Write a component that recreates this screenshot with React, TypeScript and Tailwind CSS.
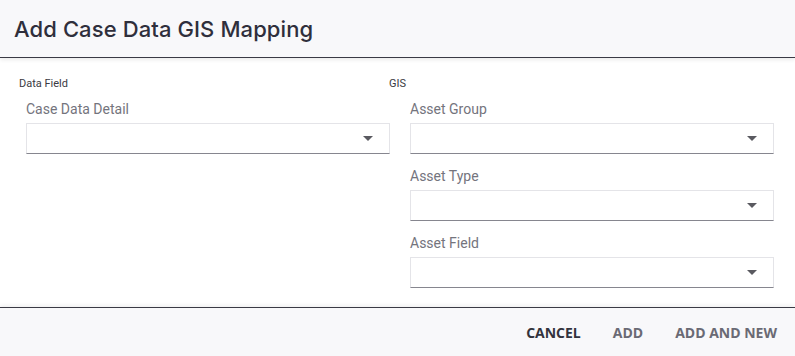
import React from "react";

function Select({ label }: { label: string }) {
  return (
    <div className="flex flex-col">
      <div className="text-[14px] leading-[16px] text-[#74747d] mb-[6px]">{label}</div>
      <div className="h-[31px] border border-[#e4e4e8] border-b-[#86868f] bg-white flex items-center justify-end pr-[16px]">
        <svg width="10" height="5" viewBox="0 0 10 5">
          <path d="M0 0 L10 0 L5 5 Z" fill="#5a5a60" />
        </svg>
      </div>
    </div>
  );
}

export default function App() {
  return (
    <div
      className="w-[795px] h-[356px] flex flex-col bg-white overflow-hidden"
      style={{ fontFamily: "Roboto, 'Liberation Sans', sans-serif" }}
    >
      <div className="h-[58px] shrink-0 bg-[#f8f8fa] border-b border-[#3a3a45] flex items-center px-[14px] shadow-[0_2px_4px_rgba(0,0,0,0.08)] relative z-10">
        <h1
          className="text-[22px] font-medium text-[#2f2f3c] leading-none tracking-[0.1px]"
          style={{ fontFamily: "Inter, Roboto, sans-serif" }}
        >
          Add Case Data GIS Mapping
        </h1>
      </div>
      <div className="flex-1 flex px-[19px] pt-[19px]">
        <div className="w-[371px] flex flex-col">
          <div className="text-[11px] leading-[13px] text-[#3a3a42] mb-[11px]">Data Field</div>
          <div className="pl-[7px]">
            <Select label="Case Data Detail" />
          </div>
        </div>
        <div className="flex-1 flex flex-col">
          <div className="text-[11px] leading-[13px] text-[#3a3a42] mb-[11px] -ml-[1px]">GIS</div>
          <div className="pl-[20px] pr-[2px] flex flex-col gap-[14px]">
            <Select label="Asset Group" />
            <Select label="Asset Type" />
            <Select label="Asset Field" />
          </div>
        </div>
      </div>
      <div className="h-[49px] shrink-0 bg-[#f8f8fa] border-t border-[#3a3a45] flex items-center justify-end pr-[18px] gap-[32px] shadow-[0_-2px_4px_rgba(0,0,0,0.06)]">
        <button
          className="text-[14px] font-bold text-[#33333d]"
          style={{ fontFamily: "'Open Sans', sans-serif" }}
        >
          CANCEL
        </button>
        <button
          className="text-[14px] font-bold text-[#6a6a74]"
          style={{ fontFamily: "'Open Sans', sans-serif" }}
        >
          ADD
        </button>
        <button
          className="text-[14px] font-bold text-[#6a6a74]"
          style={{ fontFamily: "'Open Sans', sans-serif" }}
        >
          ADD AND NEW
        </button>
      </div>
    </div>
  );
}
